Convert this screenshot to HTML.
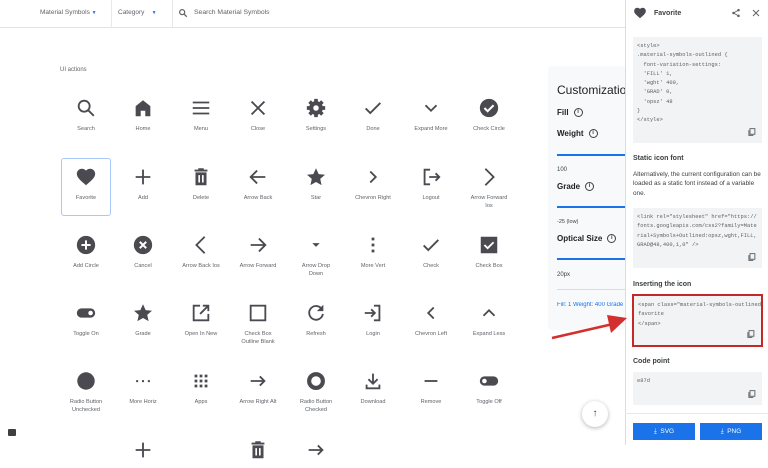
<!DOCTYPE html>
<html><head><meta charset="utf-8"><style>
*{margin:0;padding:0;box-sizing:border-box}
body{width:768px;height:445px;overflow:hidden;background:#fff;font-family:"Liberation Sans",sans-serif;color:#3c4043;position:relative}
.a{position:absolute}
.cell{position:absolute;width:58px;text-align:center}
.cell svg{display:block;margin:0 auto;width:22px;height:22px}
.lbl{font-size:5.6px;color:#5f6368;line-height:7.5px;margin-top:7px}
.code{position:absolute;background:#f1f3f4;font-family:"Liberation Mono",monospace;font-size:5.4px;line-height:9.3px;color:#5f6368;padding:5px 4px;white-space:pre}
.cp{position:absolute;right:6px;bottom:6px;width:9px;height:10px}
.h{position:absolute;font-size:7px;font-weight:bold;color:#3c4043}
.btn{position:absolute;top:423px;height:17px;width:62px;background:#1a73e8;color:#fff;font-size:6.5px;text-align:center;line-height:17px}
.cs{font-size:8px;font-weight:bold;color:#202124}
.sl{position:absolute;left:557px;width:68px;height:2px;background:#1a73e8}
.info{display:inline-block;width:9px;height:9px;border:1.3px solid #3c4043;border-radius:50%;vertical-align:middle;margin-left:5px;font-size:5px;text-align:center;line-height:6px;font-weight:bold}
</style></head><body>
<!-- top bar -->
<div class="a" style="left:0;top:0;width:625px;height:28px;border-bottom:1px solid #e4e4e4"></div>
<div class="a" style="left:40px;top:9px;font-size:6.5px;color:#5f6368">Material Symbols <span style="color:#1a73e8;font-size:5px">▼</span></div>
<div class="a" style="left:111px;top:0;width:1px;height:28px;background:#e8e8e8"></div>
<div class="a" style="left:118px;top:9px;font-size:6.5px;color:#5f6368">Category &nbsp;&nbsp;&nbsp;<span style="color:#1a73e8;font-size:5px">▼</span></div>
<div class="a" style="left:172px;top:0;width:1px;height:28px;background:#e8e8e8"></div>
<svg class="a" style="left:178px;top:8px" width="10" height="10" viewBox="0 0 24 24"><circle cx="10" cy="10" r="6" fill="none" stroke="#5f6368" stroke-width="3"/><path d="M14 14l7 7" stroke="#5f6368" stroke-width="3"/></svg>
<div class="a" style="left:194px;top:9px;font-size:6.8px;color:#5f6368">Search Material Symbols</div>
<div class="a" style="left:60px;top:67px;font-size:6px;color:#5f6368">UI actions</div>
<div class="a" style="left:61px;top:158px;width:50px;height:58px;border:1px solid #a8c7fa;border-radius:3px"></div>

<div id="grid"></div>

<!-- customization card -->
<div class="a" style="left:548px;top:66px;width:78px;height:264px;background:#f8f9fa;border-radius:4px"></div>
<div class="a" style="left:557px;top:83px;font-size:12px;color:#202124">Customization</div>
<div class="a cs" style="left:557px;top:108px">Fill<span class="info">i</span></div>
<div class="a cs" style="left:557px;top:129px">Weight<span class="info">i</span></div>
<div class="sl" style="top:154px"></div>
<div class="a" style="left:557px;top:167px;font-size:6px">100</div>
<div class="a cs" style="left:557px;top:182px">Grade<span class="info">i</span></div>
<div class="sl" style="top:206px"></div>
<div class="a" style="left:557px;top:219px;font-size:5.5px">-25 (low)</div>
<div class="a cs" style="left:557px;top:234px">Optical Size<span class="info">i</span></div>
<div class="sl" style="top:258px"></div>
<div class="a" style="left:557px;top:272px;font-size:6px">20px</div>
<div class="a" style="left:557px;top:289px;width:68px;height:1px;background:#dadce0"></div>
<div class="a" style="left:557px;top:302px;font-size:6px;color:#1a73e8;white-space:nowrap;width:68px;overflow:hidden">Fill: 1 Weight: 400 Grade</div>

<!-- right panel -->
<div class="a" style="left:625px;top:0;width:143px;height:445px;background:#fff;border-left:1px solid #dadce0"></div>
<svg class="a" style="left:633px;top:6px" width="14" height="14" viewBox="0 0 24 24"><path d="M12 21l-1.5-1.3C5 15 2 12.2 2 8.5 2 5.5 4.4 3 7.5 3c1.7 0 3.4.8 4.5 2.1C13.1 3.8 14.8 3 16.5 3 19.6 3 22 5.5 22 8.5c0 3.7-3 6.5-8.5 11.2z" fill="#4a4a50"/></svg>
<div class="a" style="left:654px;top:10px;font-size:7px;font-weight:bold">Favorite</div>
<svg class="a" style="left:731px;top:8px" width="10" height="10" viewBox="0 0 24 24"><circle cx="18" cy="5" r="3" fill="#5f6368"/><circle cx="6" cy="12" r="3" fill="#5f6368"/><circle cx="18" cy="19" r="3" fill="#5f6368"/><path d="M6 12L18 5M6 12l12 7" stroke="#5f6368" stroke-width="2"/></svg>
<svg class="a" style="left:752px;top:9px" width="8" height="8" viewBox="0 0 24 24"><path d="M3 3l18 18M21 3L3 21" stroke="#5f6368" stroke-width="3"/></svg>

<div class="code" style="left:633px;top:37px;width:129px;height:106px">&lt;style&gt;
.material-symbols-outlined {
  font-variation-settings:
  'FILL' 1,
  'wght' 400,
  'GRAD' 0,
  'opsz' 48
}
&lt;/style&gt;<svg class="cp" viewBox="0 0 24 24"><rect x="8" y="3" width="13" height="15" fill="none" stroke="#5f6368" stroke-width="2.5"/><path d="M5 7v14h12" fill="none" stroke="#5f6368" stroke-width="2.5"/></svg></div>
<div class="h" style="left:633px;top:155px">Static icon font</div>
<div class="a" style="left:633px;top:170px;width:130px;font-size:6.4px;line-height:9.3px">Alternatively, the current configuration can be loaded as a static font instead of a variable one.</div>
<div class="code" style="left:633px;top:208px;width:129px;height:60px;white-space:pre-wrap;word-break:break-all">&lt;link rel="stylesheet" href="https://fonts.googleapis.com/css2?family=Material+Symbols+Outlined:opsz,wght,FILL,GRAD@48,400,1,0" /&gt;<svg class="cp" viewBox="0 0 24 24"><rect x="8" y="3" width="13" height="15" fill="none" stroke="#5f6368" stroke-width="2.5"/><path d="M5 7v14h12" fill="none" stroke="#5f6368" stroke-width="2.5"/></svg></div>
<div class="h" style="left:633px;top:281px">Inserting the icon</div>
<div class="code" style="left:632px;top:294px;width:131px;height:53px;border:2px solid #c62828;overflow:hidden">&lt;span class="material-symbols-outlined"&gt;
favorite
&lt;/span&gt;<svg class="cp" viewBox="0 0 24 24"><rect x="8" y="3" width="13" height="15" fill="none" stroke="#5f6368" stroke-width="2.5"/><path d="M5 7v14h12" fill="none" stroke="#5f6368" stroke-width="2.5"/></svg></div>
<div class="h" style="left:633px;top:358px">Code point</div>
<div class="code" style="left:633px;top:372px;width:129px;height:33px">e87d<svg class="cp" viewBox="0 0 24 24"><rect x="8" y="3" width="13" height="15" fill="none" stroke="#5f6368" stroke-width="2.5"/><path d="M5 7v14h12" fill="none" stroke="#5f6368" stroke-width="2.5"/></svg></div>
<div class="a" style="left:625px;top:413px;width:143px;height:1px;background:#e8e8e8"></div>
<div class="btn" style="left:633px">⤓ &nbsp;SVG</div>
<div class="btn" style="left:700px">⤓ &nbsp;PNG</div>

<!-- red arrow -->
<svg class="a" style="left:545px;top:305px" width="85" height="40" viewBox="0 0 85 40"><path d="M7 33L68 19" stroke="#d32f2f" stroke-width="2.5"/><path d="M82 13L62 10 66 28z" fill="#d32f2f"/></svg>

<!-- up button -->
<div class="a" style="left:582px;top:401px;width:26px;height:26px;border-radius:50%;background:#fff;box-shadow:0 1px 4px rgba(0,0,0,.3);text-align:center;line-height:26px;font-size:10px;color:#3c4043">↑</div>
<div class="a" style="left:8px;top:429px;width:8px;height:7px;background:#3c4043;border-radius:1px"></div>

<script>
const F='#4a4a50';
const S=(d,w)=>`<path d="${d}" fill="none" stroke="${F}" stroke-width="${w||2}"/>`;
const P=d=>`<path d="${d}" fill="${F}"/>`;
const star=P('M12 2.5l2.9 6.3 6.9.7-5.2 4.6 1.5 6.8L12 17.4l-6.1 3.5 1.5-6.8-5.2-4.6 6.9-.7z');
const I={
search:`<circle cx="10" cy="10" r="6" fill="none" stroke="${F}" stroke-width="2"/>`+S('M14.5 14.5L20.5 20.5'),
home:P('M4 21V10l8-6.5 8 6.5v11h-5.5v-6h-5v6z'),
menu:S('M3 6h18M3 12h18M3 18h18'),
close:S('M5 5l14 14M19 5L5 19'),
settings:`<circle cx="12" cy="12" r="7.5" fill="${F}"/><path d="M12 2v20M2 12h20M5 5l14 14M19 5L5 19" stroke="${F}" stroke-width="4"/><circle cx="12" cy="12" r="3" fill="#fff"/>`,
done:S('M4 12.5l5 5L20 6.5'),
expmore:S('M6 9l6 6 6-6'),
chkc:`<circle cx="12" cy="12" r="10" fill="${F}"/>`+'<path d="M7 12l3.5 3.5L17 9" fill="none" stroke="#fff" stroke-width="2.2"/>',
fav:P('M12 21l-1.5-1.3C5 15 2 12.2 2 8.5 2 5.5 4.4 3 7.5 3c1.7 0 3.4.8 4.5 2.1C13.1 3.8 14.8 3 16.5 3 19.6 3 22 5.5 22 8.5c0 3.7-3 6.5-8.5 11.2z'),
add:S('M12 4v16M4 12h16'),
del:P('M6 7h12v14H6zM5 4h14v2H5zM9 2.5h6V4H9z')+'<path d="M10 10v8M14 10v8" stroke="#fff" stroke-width="1.8"/>',
aback:S('M20 12H5M11 5l-7 7 7 7'),
star:star,
chr:S('M9 6l6 6-6 6'),
logout:S('M11 4H5v16h6M10 12h11M17 8l4 4-4 4'),
afios:S('M8 3l9 9-9 9'),
addc:`<circle cx="12" cy="12" r="10" fill="${F}"/><path d="M12 7v10M7 12h10" stroke="#fff" stroke-width="2.2"/>`,
cancel:`<circle cx="12" cy="12" r="10" fill="${F}"/><path d="M8.5 8.5l7 7M15.5 8.5l-7 7" stroke="#fff" stroke-width="2.2"/>`,
abios:S('M16 3l-9 9 9 9'),
afwd:S('M4 12h15M13 5l7 7-7 7'),
adrop:P('M8 10h8l-4 4z'),
mvert:P('M10.5 4h3v3h-3zM10.5 10.5h3v3h-3zM10.5 17h3v3h-3z'),
check:S('M4 12.5l5 5L20 6.5'),
chkbox:P('M3 3h18v18H3z')+'<path d="M7 12l3.5 3.5L17 9" fill="none" stroke="#fff" stroke-width="2"/>',
togon:'<rect x="2" y="7" width="20" height="10" rx="5" fill="'+F+'"/><circle cx="17" cy="12" r="2.5" fill="#fff"/>',
grade:star,
openn:S('M11 4H4v16h16v-7')+S('M14 4h6v6M20 4l-9 9'),
cbob:'<rect x="4" y="4" width="16" height="16" fill="none" stroke="'+F+'" stroke-width="2"/>',
refresh:S('M18.5 8A7.5 7.5 0 1 0 19.5 13')+P('M20 3v7h-7z'),
login:S('M13 4h6v16h-6M3 12h11M10 8l4 4-4 4'),
chl:S('M15 6l-6 6 6 6'),
expless:S('M6 15l6-6 6 6'),
radu:`<circle cx="12" cy="12" r="9.5" fill="${F}"/>`,
mhoriz:P('M4.5 11h2.2v2.2H4.5zM10.9 11h2.2v2.2h-2.2zM17.3 11h2.2v2.2h-2.2z'),
apps:P('M5 5h3v3H5zM10.5 5h3v3h-3zM16 5h3v3h-3zM5 10.5h3v3H5zM10.5 10.5h3v3h-3zM16 10.5h3v3h-3zM5 16h3v3H5zM10.5 16h3v3h-3zM16 16h3v3h-3z'),
ara:S('M4 12h15M14 7l5 5-5 5'),
radc:`<circle cx="12" cy="12" r="7.5" fill="none" stroke="${F}" stroke-width="4.5"/>`,
dl:S('M12 4v11M7 10l5 5 5-5M5 16v4h14v-4'),
rem:S('M5 12h14'),
togoff:'<rect x="2" y="7" width="20" height="10" rx="5" fill="'+F+'"/><circle cx="7" cy="12" r="2.5" fill="#fff"/>'
};
const rows=[
[['search','Search'],['home','Home'],['menu','Menu'],['close','Close'],['settings','Settings'],['done','Done'],['expmore','Expand More'],['chkc','Check Circle']],
[['fav','Favorite'],['add','Add'],['del','Delete'],['aback','Arrow Back'],['star','Star'],['chr','Chevron Right'],['logout','Logout'],['afios','Arrow Forward<br>Ios']],
[['addc','Add Circle'],['cancel','Cancel'],['abios','Arrow Back Ios'],['afwd','Arrow Forward'],['adrop','Arrow Drop<br>Down'],['mvert','More Vert'],['check','Check'],['chkbox','Check Box']],
[['togon','Toggle On'],['grade','Grade'],['openn','Open In New'],['cbob','Check Box<br>Outline Blank'],['refresh','Refresh'],['login','Login'],['chl','Chevron Left'],['expless','Expand Less']],
[['radu','Radio Button<br>Unchecked'],['mhoriz','More Horiz'],['apps','Apps'],['ara','Arrow Right Alt'],['radc','Radio Button<br>Checked'],['dl','Download'],['rem','Remove'],['togoff','Toggle Off']],
[['chl',''],['add',''],['menu',''],['del',''],['ara',''],['menu',''],['menu',''],['menu','']]
];
const xs=[86,143,201,258,316,373,431,489], ys=[97,166,234,302,370,439];
let h='';
rows.forEach((r,ri)=>r.forEach((c,ci)=>{
 if(ri==5&&[1,3,4].indexOf(ci)<0)return;
 h+=`<div class="cell" style="left:${xs[ci]-29}px;top:${ys[ri]}px"><svg viewBox="0 0 24 24">${I[c[0]]}</svg><div class="lbl">${c[1]}</div></div>`;
}));
document.getElementById('grid').innerHTML=h;
</script>
</body></html>
